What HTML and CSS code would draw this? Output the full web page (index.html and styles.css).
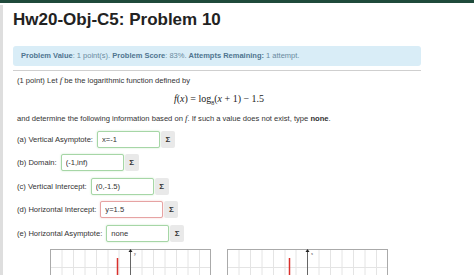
FILE: index.html
```html
<!DOCTYPE html>
<html lang="en">
<head>
    <meta charset="UTF-8">
    <title>Hw20-Obj-C5: Problem 10</title>
    <link rel="stylesheet" href="styles.css">
</head>
<body>
    <div class="topbar"></div>
    <div class="page">
        <h1 class="title">Hw20-Obj-C5: Problem 10</h1>

        <div class="info">
            <b>Problem Value</b>: 1 point(s). <b>Problem Score</b>: 83%. <b>Attempts Remaining:</b> 1 attempt.
        </div>
        <hr class="rule">

        <div class="problem">
            <p>(1 point) Let <i class="m">f</i> be the logarithmic function defined by</p>
            <div class="formula">
                <i>f</i>(<i>x</i>) = log<sub>8</sub>(<i>x</i> + 1) &minus; 1.5
            </div>
            <p>and determine the following information based on <i class="m">f</i>. If such a value does not exist, type <b>none</b>.</p>

            <div class="answer">
                <label>(a) Vertical Asymptote:</label>
                <input class="ans ok" value="x=-1">
                <span class="sigma">&Sigma;</span>
            </div>
            <div class="answer">
                <label>(b) Domain:</label>
                <input class="ans ok" value="(-1,inf)">
                <span class="sigma">&Sigma;</span>
            </div>
            <div class="answer">
                <label>(c) Vertical Intercept:</label>
                <input class="ans ok" value="(0,-1.5)">
                <span class="sigma">&Sigma;</span>
            </div>
            <div class="answer">
                <label>(d) Horizontal Intercept:</label>
                <input class="ans bad" value="y=1.5">
                <span class="sigma">&Sigma;</span>
            </div>
            <div class="answer">
                <label>(e) Horizontal Asymptote:</label>
                <input class="ans ok" value="none">
                <span class="sigma">&Sigma;</span>
            </div>

            <div class="graphs">
                <svg class="graph" width="161" height="40" viewBox="0 0 161 40">
                    <g stroke="#e4e4e4" stroke-width="1">
                        <line x1="12" y1="0" x2="12" y2="40"/>
                        <line x1="23.5" y1="0" x2="23.5" y2="40"/>
                        <line x1="35" y1="0" x2="35" y2="40"/>
                        <line x1="46.5" y1="0" x2="46.5" y2="40"/>
                        <line x1="58" y1="0" x2="58" y2="40"/>
                        <line x1="69" y1="0" x2="69" y2="40"/>
                        <line x1="92" y1="0" x2="92" y2="40"/>
                        <line x1="103.5" y1="0" x2="103.5" y2="40"/>
                        <line x1="115" y1="0" x2="115" y2="40"/>
                        <line x1="126.5" y1="0" x2="126.5" y2="40"/>
                        <line x1="138" y1="0" x2="138" y2="40"/>
                        <line x1="149.5" y1="0" x2="149.5" y2="40"/>
                        <line x1="0" y1="18.5" x2="161" y2="18.5"/>
                    </g>
                    <rect x="0.5" y="0.5" width="160" height="45" fill="none" stroke="#aaa"/>
                    <line x1="80.5" y1="1" x2="80.5" y2="40" stroke="#666"/>
                    <path d="M78.5 3 L80.5 0 L82.5 3 Z" fill="#222"/>
                    <text x="84" y="6" font-size="4" fill="#333" font-family="Liberation Serif, serif">y</text>
                    <line x1="67.5" y1="9" x2="67.5" y2="40" stroke="#d9302c" stroke-width="1.5"/>
                </svg>
                <svg class="graph" width="161" height="40" viewBox="0 0 161 40">
                    <g stroke="#e4e4e4" stroke-width="1">
                        <line x1="12" y1="0" x2="12" y2="40"/>
                        <line x1="23.5" y1="0" x2="23.5" y2="40"/>
                        <line x1="35" y1="0" x2="35" y2="40"/>
                        <line x1="46.5" y1="0" x2="46.5" y2="40"/>
                        <line x1="58" y1="0" x2="58" y2="40"/>
                        <line x1="69" y1="0" x2="69" y2="40"/>
                        <line x1="92" y1="0" x2="92" y2="40"/>
                        <line x1="103.5" y1="0" x2="103.5" y2="40"/>
                        <line x1="115" y1="0" x2="115" y2="40"/>
                        <line x1="126.5" y1="0" x2="126.5" y2="40"/>
                        <line x1="138" y1="0" x2="138" y2="40"/>
                        <line x1="149.5" y1="0" x2="149.5" y2="40"/>
                        <line x1="0" y1="18.5" x2="161" y2="18.5"/>
                    </g>
                    <rect x="0.5" y="0.5" width="160" height="45" fill="none" stroke="#aaa"/>
                    <line x1="80.5" y1="1" x2="80.5" y2="40" stroke="#666"/>
                    <path d="M78.5 3 L80.5 0 L82.5 3 Z" fill="#222"/>
                    <text x="84" y="6" font-size="4" fill="#333" font-family="Liberation Serif, serif">x</text>
                    <line x1="62.5" y1="9" x2="62.5" y2="40" stroke="#d9302c" stroke-width="1.5"/>
                </svg>
            </div>
        </div>
    </div>
</body>
</html>
```

FILE: styles.css
```css
body {
    margin: 0;
    padding: 0;
    font-family: "Liberation Sans", Arial, sans-serif;
    color: #333;
    background-color: #fff;
    overflow: hidden;
}
.topbar {
    height: 3px;
    background-color: #1f4a3b;
}
.page {
    border-left: 3px solid #dedede;
    margin-top: 2px;
    padding-left: 10px;
    width: 408px;
    height: 270px;
}
.title {
    font-size: 17px;
    line-height: 24px;
    font-weight: bold;
    color: #222;
    margin: 0;
    padding-top: 3px;
}
.info {
    margin-top: 14px;
    height: 20px;
    line-height: 20px;
    padding-left: 8px;
    background-color: #d9edf7;
    border-radius: 3px;
    color: #6a8aa0;
    font-size: 7.5px;
}
.info b {
    color: #4f7590;
}
.rule {
    margin: 4px 0 0 0;
    border: 0;
    border-top: 1px solid #cfcfcf;
}
.problem {
    padding-left: 4px;
    font-size: 7.6px;
}
.problem p {
    margin: 0;
    line-height: 10px;
}
.problem p:first-child {
    margin-top: 4px;
}
.m {
    font-family: "Liberation Serif", serif;
    font-size: 9px;
}
.formula {
    text-align: center;
    font-family: "Liberation Serif", serif;
    font-size: 10px;
    height: 22px;
    line-height: 16px;
    padding-top: 5px;
    color: #222;
}
.formula sub {
    font-size: 6px;
}
.answer {
    display: flex;
    align-items: center;
    height: 17px;
    margin-top: 6.5px;
}
.answer:first-of-type {
    margin-top: 9px;
}
.answer label {
    margin-right: 4px;
}
.ans {
    box-sizing: border-box;
    width: 63px;
    height: 17px;
    padding: 0 0 0 4px;
    margin: 0;
    font-family: "Liberation Sans", Arial, sans-serif;
    font-size: 7.6px;
    color: #333;
    border-radius: 2px;
    background-color: #fff;
    outline: none;
}
.ok {
    border: 1px solid #a6d6a6;
    box-shadow: 0 0 2px rgba(92, 184, 92, 0.35);
}
.bad {
    border: 1px solid #e6a3a3;
    box-shadow: 0 0 2px rgba(217, 83, 79, 0.3);
}
.sigma {
    box-sizing: border-box;
    width: 14px;
    height: 17px;
    margin-left: 1px;
    display: flex;
    align-items: center;
    justify-content: center;
    font-size: 8px;
    font-weight: bold;
    color: #333;
    background-color: #e9e9e9;
    border-radius: 2px;
}
.graphs {
    display: flex;
    justify-content: center;
    gap: 16px;
    margin-top: 7px;
}
.graph {
    display: block;
}
```
